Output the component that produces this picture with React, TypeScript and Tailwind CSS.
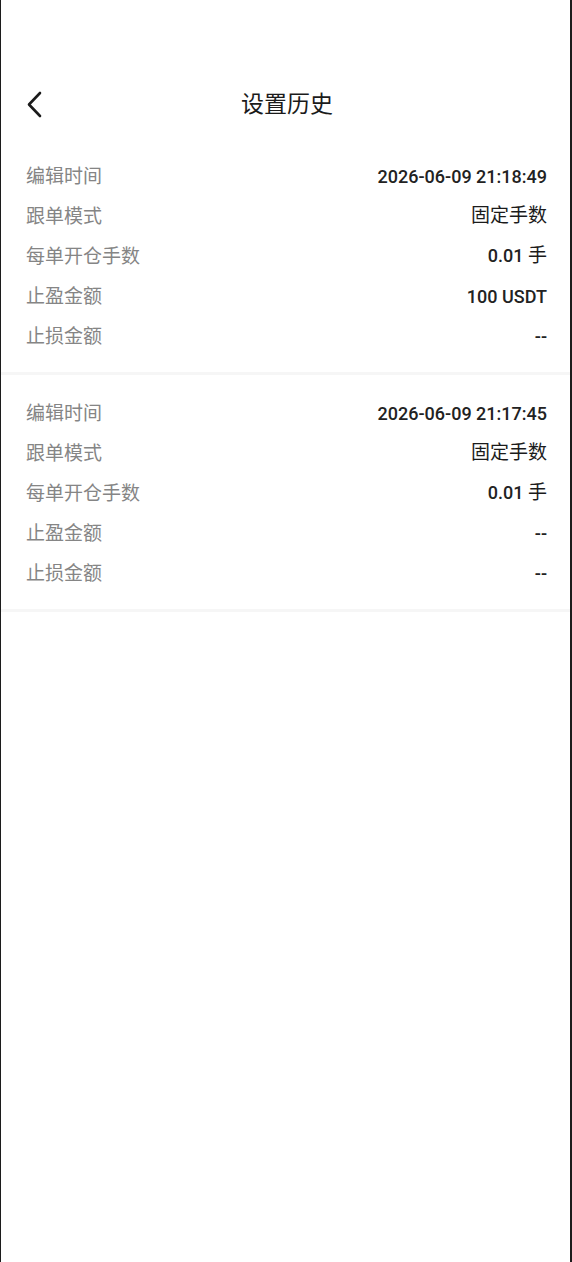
const records = [
  {
    time: "2026-06-09 21:18:49",
    mode: "固定手数",
    lots: "0.01 手",
    tp: "100 USDT",
    sl: "--",
  },
  {
    time: "2026-06-09 21:17:45",
    mode: "固定手数",
    lots: "0.01 手",
    tp: "--",
    sl: "--",
  },
];

// numbers a bit heavier than the CJK glyphs, like the app's DIN font
function Value({ text }: { text: string }) {
  const parts = text.split(/([\u4e00-\u9fff]+)/).filter(Boolean);
  return (
    <span className="text-[#1b1b1b]">
      {parts.map((p, i) =>
        /[\u4e00-\u9fff]/.test(p) ? (
          <span key={i} className="text-[19px] font-normal">
            {p}
          </span>
        ) : (
          <span key={i} className="text-[18px] font-medium text-[#222]">
            {p}
          </span>
        )
      )}
    </span>
  );
}

function Row({ label, value }: { label: string; value: string }) {
  return (
    <div className="flex h-10 items-center justify-between">
      <span className="text-[19px] text-[#858585] leading-none pt-[1px]">{label}</span>
      <Value text={value} />
    </div>
  );
}

export default function App() {
  return (
    <div
      className="min-h-[1262px] w-[572px] bg-white border-l border-r-2 border-[#1c1c1c]"
      style={{ fontFamily: "Roboto, 'Noto Sans CJK SC', sans-serif" }}
    >
      {/* header */}
      <div className="pt-[72px]">
        <div className="relative flex h-[66px] items-center justify-center">
          <button className="absolute left-[24px] top-[19px]">
            <svg width="18" height="27" viewBox="0 0 18 27" fill="none">
              <polyline
                points="15,2 4,13.5 15,25"
                stroke="#1b1b1b"
                strokeWidth="2.6"
                strokeLinecap="round"
                strokeLinejoin="round"
              />
            </svg>
          </button>
          <h1 className="text-[23px] text-[#1b1b1b] pl-[3px]">设置历史</h1>
        </div>
      </div>

      {records.map((r, i) => (
        <div key={i} className="border-b-[3px] border-[#f6f6f6] pl-[25px] pr-[23px] pt-[18px] pb-[16px]">
          <Row label="编辑时间" value={r.time} />
          <Row label="跟单模式" value={r.mode} />
          <Row label="每单开仓手数" value={r.lots} />
          <Row label="止盈金额" value={r.tp} />
          <Row label="止损金额" value={r.sl} />
        </div>
      ))}
    </div>
  );
}
